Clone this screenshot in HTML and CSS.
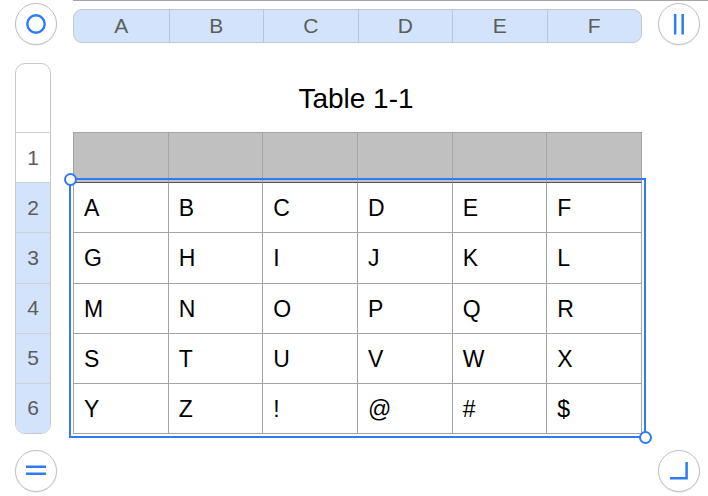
FILE: index.html
```html
<!DOCTYPE html>
<html lang="en">
<head>
<meta charset="utf-8">
<title>Table 1-1</title>
<link rel="stylesheet" href="styles.css">
</head>
<body>
<div class="app">
  <div class="topline"></div>

  <button class="circle-btn btn-tl" aria-label="Select table">
    <svg width="42" height="42" viewBox="0 0 42 42"><circle cx="21" cy="21" r="8.7" fill="none" stroke="#2f7bf6" stroke-width="2.4"/></svg>
  </button>

  <div class="colhead">
    <div class="ch">A</div><div class="ch">B</div><div class="ch">C</div><div class="ch">D</div><div class="ch">E</div><div class="ch">F</div>
  </div>

  <button class="circle-btn btn-tr" aria-label="Columns">
    <svg width="42" height="42" viewBox="0 0 42 42"><rect x="15.9" y="11" width="2.5" height="20.5" fill="#2f7bf6"/><rect x="23.4" y="11" width="2.5" height="20.5" fill="#2f7bf6"/></svg>
  </button>

  <div class="rowhead">
    <div class="rh rh-blank"></div>
    <div class="rh">1</div>
    <div class="rh sel">2</div>
    <div class="rh sel">3</div>
    <div class="rh sel">4</div>
    <div class="rh sel">5</div>
    <div class="rh sel">6</div>
  </div>

  <div class="title">Table 1-1</div>

  <div class="table-wrap">
    <div class="table">
      <div class="cell hdr"></div><div class="cell hdr"></div><div class="cell hdr"></div><div class="cell hdr"></div><div class="cell hdr"></div><div class="cell hdr"></div>
      <div class="cell">A</div><div class="cell">B</div><div class="cell">C</div><div class="cell">D</div><div class="cell">E</div><div class="cell">F</div>
      <div class="cell">G</div><div class="cell">H</div><div class="cell">I</div><div class="cell">J</div><div class="cell">K</div><div class="cell">L</div>
      <div class="cell">M</div><div class="cell">N</div><div class="cell">O</div><div class="cell">P</div><div class="cell">Q</div><div class="cell">R</div>
      <div class="cell">S</div><div class="cell">T</div><div class="cell">U</div><div class="cell">V</div><div class="cell">W</div><div class="cell">X</div>
      <div class="cell">Y</div><div class="cell">Z</div><div class="cell">!</div><div class="cell">@</div><div class="cell">#</div><div class="cell">$</div>
    </div>
    <div class="selection">
      <span class="handle handle-tl"></span>
      <span class="handle handle-br"></span>
    </div>
  </div>

  <button class="circle-btn btn-bl" aria-label="Rows">
    <svg width="42" height="42" viewBox="0 0 42 42"><rect x="11" y="15.5" width="20" height="2.5" fill="#2f7bf6"/><rect x="11" y="22.5" width="20" height="2.5" fill="#2f7bf6"/></svg>
  </button>

  <button class="circle-btn btn-br" aria-label="Resize">
    <svg width="42" height="42" viewBox="0 0 42 42"><path d="M12 28.3 H28.6 V12" fill="none" stroke="#2f7bf6" stroke-width="2.5"/></svg>
  </button>
</div>
</body>
</html>
```

FILE: styles.css
```css
html, body {
  margin: 0;
  padding: 0;
  background: #ffffff;
}

body {
  font-family: "Liberation Sans", Arial, Helvetica, sans-serif;
  color: #000;
}

.app {
  display: grid;
  grid-template-columns: 73px 569px 66px;
  grid-template-rows: 50px 82px 302px 62px;
  width: 708px;
  height: 496px;
}

.topline {
  grid-column: 2 / 4;
  grid-row: 1;
  align-self: start;
  height: 1px;
  background: #a4a4a4;
}

.circle-btn {
  width: 42px;
  height: 42px;
  padding: 0;
  margin: 0;
  border: 1px solid #c2c2c2;
  border-radius: 50%;
  background: #fff;
  box-shadow: 0 0.5px 1px rgba(0, 0, 0, 0.12);
  box-sizing: border-box;
  justify-self: start;
  align-self: start;
  display: flex;
  align-items: center;
  justify-content: center;
  overflow: hidden;
}

.circle-btn svg {
  display: block;
  flex: none;
}

.btn-tl { grid-column: 1; grid-row: 1; margin: 3px 0 0 15px; }
.btn-tr { grid-column: 3; grid-row: 1; margin: 3px 0 0 16px; }
.btn-bl { grid-column: 1; grid-row: 4; margin: 16px 0 0 15px; }
.btn-br { grid-column: 3; grid-row: 4; margin: 16px 0 0 16px; }

.colhead {
  grid-column: 2;
  grid-row: 1;
  align-self: start;
  margin-top: 9px;
  height: 34px;
  box-sizing: border-box;
  display: grid;
  grid-template-columns: repeat(6, 1fr);
  background: #d2e3fb;
  border: 1px solid #c4c8ce;
  border-radius: 9px;
  overflow: hidden;
}

.ch {
  display: flex;
  align-items: center;
  justify-content: center;
  font-size: 21px;
  color: #5c5c5c;
}

.ch + .ch {
  border-left: 1px solid #b7c5d9;
}

.rowhead {
  grid-column: 1;
  grid-row: 2 / 4;
  justify-self: start;
  align-self: start;
  margin: 13px 0 0 15px;
  width: 36px;
  height: 371px;
  box-sizing: border-box;
  border: 1px solid #c8c8c8;
  border-radius: 10px;
  overflow: hidden;
  display: grid;
  grid-template-rows: 68px repeat(6, 1fr);
  background: #fff;
}

.rh {
  display: flex;
  align-items: center;
  justify-content: center;
  font-size: 21px;
  color: #5c5c5c;
  border-top: 1px solid #cdd2d8;
}

.rh-blank {
  border-top: none;
}

.rh.sel {
  background: #d2e3fb;
}

.title {
  grid-column: 2;
  grid-row: 2;
  padding-top: 33px;
  padding-right: 3px;
  text-align: center;
  font-size: 28px;
  line-height: 32px;
  color: #000;
}

.table-wrap {
  grid-column: 2;
  grid-row: 3;
  position: relative;
}

.table {
  display: grid;
  grid-template-columns: repeat(6, 1fr);
  grid-template-rows: repeat(6, 1fr);
  height: 302px;
  box-sizing: border-box;
  border-top: 1px solid #a4a4a4;
  border-left: 1px solid #a4a4a4;
}

.cell {
  display: flex;
  align-items: center;
  padding-left: 10px;
  padding-top: 2px;
  font-size: 23px;
  color: #000;
  border-right: 1px solid #a4a4a4;
  border-bottom: 1px solid #a4a4a4;
  background: #fff;
}

.cell.hdr {
  background: #bfc0bf;
  border-bottom-color: #555;
}

.selection {
  position: absolute;
  left: -4px;
  top: 46px;
  width: 577px;
  height: 260px;
  box-sizing: border-box;
  border: 2px solid #2f7bf6;
  pointer-events: none;
}

.handle {
  position: absolute;
  width: 13px;
  height: 13px;
  box-sizing: border-box;
  border: 2px solid #2f7bf6;
  border-radius: 50%;
  background: #fff;
}

.handle-tl { left: -7.5px; top: -7.5px; }
.handle-br { right: -7.5px; bottom: -7.5px; }
```
